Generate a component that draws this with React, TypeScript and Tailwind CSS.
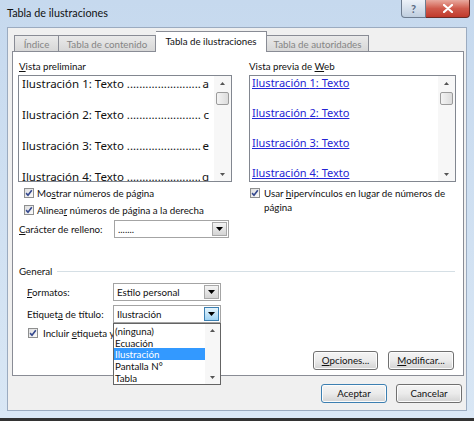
import React from "react";

function Check() {
  return (
    <span className="w-[10px] h-[10px] border border-[#8e8f8f] bg-linear-to-br from-[#dedede] to-[#fbfbfb] flex items-center justify-center shrink-0">
      <svg width="8" height="8" viewBox="0 0 8 8">
        <path d="M1.1 4.1 L3 6.2 L6.8 1.2" fill="none" stroke="#34488e" strokeWidth="1.6" />
      </svg>
    </span>
  );
}

function Arrow({ up }: { up?: boolean }) {
  return (
    <svg width="5" height="3" viewBox="0 0 5 3">
      <path d={up ? "M2.5 0L5 3H0z" : "M0 0h5L2.5 3z"} fill="#555" />
    </svg>
  );
}

function VScroll() {
  return (
    <div className="w-[17px] h-full bg-[#f7f7f7] flex flex-col items-center shrink-0">
      <div className="h-[14px] w-full flex items-center justify-center">
        <Arrow up />
      </div>
      <div className="mt-[2px] w-[13px] h-[13px] rounded-[2px] border border-[#9b9b9b] bg-linear-to-r from-[#f4f4f4] to-[#dcdcdc]" />
      <div className="flex-1" />
      <div className="h-[14px] w-full flex items-center justify-center">
        <Arrow />
      </div>
    </div>
  );
}

function Select({ text, w, active }: { text: string; w: string; active?: boolean }) {
  return (
    <div className={"h-[18px] border border-[#a4a4a4] bg-white flex items-stretch p-[1px] " + w}>
      <div className="flex-1 pl-[2px] leading-[14px] whitespace-nowrap overflow-hidden">{text}</div>
      {active ? (
        <span className="w-[15px] border border-[#3c7fb1] bg-linear-to-b from-[#e5f4fc] to-[#9fd3f3] flex items-center justify-center">
          <svg width="7" height="4" viewBox="0 0 7 4">
            <path d="M0 0h7L3.5 4z" fill="#000" />
          </svg>
        </span>
      ) : (
        <span className="w-[15px] border border-[#a8a8a8] bg-linear-to-b from-[#f4f4f4] to-[#d4d4d4] flex items-center justify-center">
          <svg width="7" height="4" viewBox="0 0 7 4">
            <path d="M0 0h7L3.5 4z" fill="#000" />
          </svg>
        </span>
      )}
    </div>
  );
}

function Btn({ children, w, def }: { children: React.ReactNode; w: string; def?: boolean }) {
  return (
    <div
      className={
        (def ? "border-[#3c7fb1] " : "border-[#707070] ") +
        "h-[19px] rounded-[3px] border flex items-center justify-center bg-linear-to-b from-[#f4f4f4] via-[#ebebeb] to-[#d3d3d3] shadow-[inset_0_0_0_1px_#fcfcfc] " +
        w
      }
    >
      {children}
    </div>
  );
}

const previewLines = [
  { n: 1, l: "a" },
  { n: 2, l: "c" },
  { n: 3, l: "e" },
  { n: 4, l: "g" },
];

export default function App() {
  return (
    <div className="w-[474px] h-[421px] overflow-hidden bg-linear-to-b from-[#c6d9ee] to-[#d9e7f5] font-['Lato','Noto_Sans',sans-serif] text-[9.75px] text-[#111]">
      {/* title bar */}
      <div className="h-[27px] flex justify-between items-start">
        <div className="pl-[7px] pt-[6px] leading-[14px] text-[10.8px]">Tabla de ilustraciones</div>
        <div className="flex mr-[4px]">
          <div className="w-[25px] h-[18px] border border-[#6d7c8f] border-t-0 rounded-bl-[4px] bg-linear-to-b from-[#edf2f8] to-[#bfcedf] flex items-center justify-center text-[11px] font-bold text-[#5a6a82] leading-none">
            ?
          </div>
          <div className="w-[44px] h-[18px] border border-[#6b2a24] border-t-0 border-l-0 rounded-br-[4px] bg-linear-to-b from-[#e8a99f] via-[#cf5a4c] to-[#c0392b] flex items-center justify-center">
            <svg width="10" height="9" viewBox="0 0 10 9">
              <path d="M1 1L9 8M9 1L1 8" stroke="#fff" strokeWidth="2.2" strokeLinecap="round" />
            </svg>
          </div>
        </div>
      </div>

      {/* content */}
      <div className="mx-[7px] h-[384px] bg-[#f0f0f0] border border-[#9babc0] flex flex-col">
        {/* tabs */}
        <div className="ml-[4px] mt-[3px] h-[21px] flex items-end pl-[2px]">
          <div className="w-[45px] h-[17px] border border-[#898c95] border-b-0 bg-linear-to-b from-[#eaeaea] to-[#d6d6d6] text-[#858585] flex items-center justify-center">
            Índice
          </div>
          <div className="w-[97px] h-[17px] border border-[#898c95] border-b-0 border-l-0 bg-linear-to-b from-[#eaeaea] to-[#d6d6d6] text-[#858585] flex items-center justify-center">
            Tabla de contenido
          </div>
          <div className="relative z-10 w-[111px] h-[21px] border border-[#898c95] border-b-0 border-l-0 bg-white flex items-center justify-center pb-[1px]">
            Tabla de ilustraciones
          </div>
          <div className="w-[102px] h-[17px] border border-[#898c95] border-b-0 border-l-0 bg-linear-to-b from-[#eaeaea] to-[#d6d6d6] text-[#858585] flex items-center justify-center">
            Tabla de autoridades
          </div>
        </div>

        {/* panel */}
        <div className="ml-[4px] -mt-px w-[452px] h-[325px] bg-white border border-[#898c95] flex flex-col pl-[5px] pt-[7px]">
          <div className="flex gap-[17px]">
            {/* left column */}
            <div className="w-[214px] flex flex-col">
              <div className="leading-[14px] pl-[1px]">
                <span className="underline">V</span>ista preliminar
              </div>
              <div className="mt-[2px] h-[107px] border border-[#828790] flex">
                <div className="flex-1 overflow-hidden pl-[3px] pr-[5px] font-['Noto_Sans',sans-serif] text-[11.5px] text-[#111]">
                  {previewLines.map((p) => (
                    <div key={p.n} className="h-[31px] leading-[16px] flex whitespace-nowrap">
                      <span className="flex-1 overflow-hidden">
                        Ilustración {p.n}: Texto .....................................
                      </span>
                      <span className="pl-[2px]">{p.l}</span>
                    </div>
                  ))}
                </div>
                <VScroll />
              </div>
              <div className="mt-[4px] h-[14px] flex items-center gap-[3px] pl-[6px]">
                <Check />
                <span className="leading-[14px]">
                  Mo<span className="underline">s</span>trar números de página
                </span>
              </div>
              <div className="mt-[3px] h-[14px] flex items-center gap-[3px] pl-[6px]">
                <Check />
                <span className="leading-[14px]">
                  Alinea<span className="underline">r</span> números de página a la derecha
                </span>
              </div>
              <div className="mt-[3px] flex items-center">
                <div className="w-[96px] pl-[1px] leading-[14px]">
                  <span className="underline">C</span>arácter de relleno:
                </div>
                <Select text="......." w="w-[115px]" />
              </div>
            </div>

            {/* right column */}
            <div className="w-[207px] flex flex-col">
              <div className="leading-[14px]">
                Vista previa de <span className="underline">W</span>eb
              </div>
              <div className="mt-[2px] h-[107px] border border-[#828790] flex">
                <div className="flex-1 overflow-hidden pl-[2px] font-['Noto_Sans',sans-serif] text-[11px] text-[#2424d4]">
                  {[1, 2, 3, 4].map((n) => (
                    <div key={n} className="h-[30px] leading-[14px] underline whitespace-nowrap">
                      Ilustración {n}: Texto
                    </div>
                  ))}
                </div>
                <VScroll />
              </div>
              <div className="mt-[4px] flex items-start gap-[4px] pl-[1px]">
                <div className="h-[14px] flex items-center">
                  <Check />
                </div>
                <span className="leading-[14px]">
                  Usar <span className="underline">h</span>ipervínculos en lugar de números de página
                </span>
              </div>
            </div>
          </div>

          {/* General */}
          <div className="mt-[26px] h-[14px] flex items-center pr-[8px]">
            <span className="pl-[1px] leading-[14px]">General</span>
            <div className="flex-1 ml-[5px] h-px bg-[#d5dfe5]" />
          </div>
          <div className="mt-[5px] flex items-center pl-[9px]">
            <div className="w-[86px] leading-[14px]">
              <span className="underline">F</span>ormatos:
            </div>
            <Select text="Estilo personal" w="w-[108px]" />
          </div>
          <div className="mt-[4px] flex items-center pl-[9px]">
            <div className="w-[86px] leading-[14px]">
              Etiquet<span className="underline">a</span> de título:
            </div>
            <div className="relative">
              <Select text="Ilustración" w="w-[108px]" active />
              <div className="absolute left-0 top-full z-20 w-[108px] h-[62px] border border-[#646464] bg-white flex">
                <div className="flex-1 flex flex-col leading-[12px] pt-[1px]">
                  <div className="h-[12px] pl-[1px]">(ninguna)</div>
                  <div className="h-[11px] pl-[1px]">Ecuación</div>
                  <div className="h-[12px] pl-[1px] bg-[#3399ff] text-white">Ilustración</div>
                  <div className="h-[12px] pl-[1px]">Pantalla N°</div>
                  <div className="h-[12px] pl-[1px]">Tabla</div>
                </div>
                <div className="w-[15px] bg-[#f7f7f7] flex flex-col items-center justify-between py-[5px]">
                  <Arrow up />
                  <Arrow />
                </div>
              </div>
            </div>
          </div>
          <div className="mt-[3px] h-[14px] flex items-center gap-[5px] pl-[10px]">
            <Check />
            <span className="leading-[14px] whitespace-nowrap">
              Incluir <span className="underline">e</span>tiqueta y número
            </span>
          </div>
          <div className="mt-[11px] flex justify-end gap-[10px] pr-[9px]">
            <Btn w="w-[65px]">
              <span className="underline">O</span>pciones...
            </Btn>
            <Btn w="w-[66px]">
              <span className="underline">M</span>odificar...
            </Btn>
          </div>
        </div>

        {/* bottom buttons */}
        <div className="mt-[8px] flex justify-end gap-[9px] pr-[4px]">
          <Btn w="w-[66px]" def>
            Aceptar
          </Btn>
          <Btn w="w-[66px]">Cancelar</Btn>
        </div>
      </div>
      <div className="h-[7px] bg-[#dbe8f6]" />
      <div className="h-[3px] bg-[#333]" />
    </div>
  );
}
